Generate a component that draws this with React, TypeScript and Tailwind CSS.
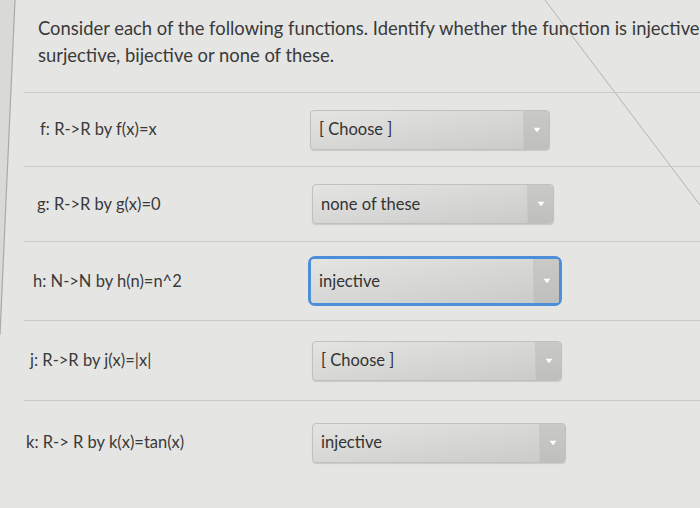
import React from "react";

type Row = {
  label: string;
  value: string;
  rowCls: string;
  labelCls: string;
  selCls: string;
  focus?: boolean;
};

const rows: Row[] = [
  { label: "f: R->R by f(x)=x", value: "[ Choose ]", rowCls: "h-[74px]", labelCls: "w-[286px] pl-[16px]", selCls: "w-[240px]" },
  { label: "g: R->R by g(x)=0", value: "none of these", rowCls: "h-[75px]", labelCls: "w-[288px] pl-[13px]", selCls: "w-[242px]" },
  { label: "h: N->N by h(n)=n^2", value: "injective", rowCls: "h-[79px]", labelCls: "w-[284px] pl-[9px]", selCls: "w-[254px]", focus: true },
  { label: "j: R->R by j(x)=|x|", value: "[ Choose ]", rowCls: "h-[80px]", labelCls: "w-[288px] pl-[6px]", selCls: "w-[250px]" },
  { label: "k: R-> R by k(x)=tan(x)", value: "injective", rowCls: "h-[84px]", labelCls: "w-[288px] pl-[2px]", selCls: "w-[254px]" },
];

function Arrow() {
  return (
    <svg width="8" height="6" viewBox="0 0 8 6">
      <path d="M0.5 0.8 L7.5 0.8 L4 5.2 Z" fill="#ffffff" />
    </svg>
  );
}

function Box({ value, focus }: { value: string; focus?: boolean }) {
  return (
    <div
      className={
        focus
          ? "flex h-[44px] items-center overflow-hidden rounded-[3px] bg-gradient-to-br from-[#e4e4e2] to-[#cacac8]"
          : "flex h-[40px] items-center overflow-hidden rounded-[4px] border border-[#c0c0be] bg-gradient-to-br from-[#e4e4e2] to-[#cacac8] shadow-[0_1px_1px_rgba(0,0,0,0.12)]"
      }
    >
      <span className="flex-1 pl-[8px] text-[16.5px] text-[#333333]">{value}</span>
      <div className="flex h-full w-[26px] items-center justify-center border-l border-[#c8c8c6] bg-gradient-to-b from-[#c9c9c7] to-[#bfbfbd]">
        <Arrow />
      </div>
    </div>
  );
}

function Select({ value, cls, focus }: { value: string; cls: string; focus?: boolean }) {
  if (focus)
    return (
      <div className={`${cls} rounded-[7px] border-[3px] border-[#4c8fd8]`}>
        <Box value={value} focus />
      </div>
    );
  return (
    <div className={cls}>
      <Box value={value} />
    </div>
  );
}

export default function App() {
  return (
    <div className="relative h-[508px] w-[700px] overflow-hidden bg-[#e5e5e3] font-['Lato',sans-serif]">
      <svg className="pointer-events-none absolute inset-0" width="700" height="508">
        <polygon points="0,0 15,0 0,335" fill="#d9d9d7" />
        <line x1="15" y1="0" x2="0" y2="335" stroke="#a9a9a7" strokeWidth="1.2" />
        <line x1="545" y1="0" x2="700" y2="205" stroke="#b3b3b1" strokeWidth="1" />
      </svg>

      <div className="relative whitespace-nowrap pl-[38px] pt-[15px] text-[18.4px] leading-[27px] text-[#3a3a3a]">
        <p>Consider each of the following functions. Identify whether the function is injective</p>
        <p>surjective, bijective or none of these.</p>
      </div>

      <div className="relative ml-[24px] mt-[23px]">
        {rows.map((r, i) => (
          <div key={i} className={`flex items-center border-t border-[#cacac8] ${r.rowCls}`}>
            <div className={`text-[16.5px] text-[#3a3a3a] ${r.labelCls}`}>{r.label}</div>
            <Select value={r.value} cls={r.selCls} focus={r.focus} />
          </div>
        ))}
      </div>
    </div>
  );
}
